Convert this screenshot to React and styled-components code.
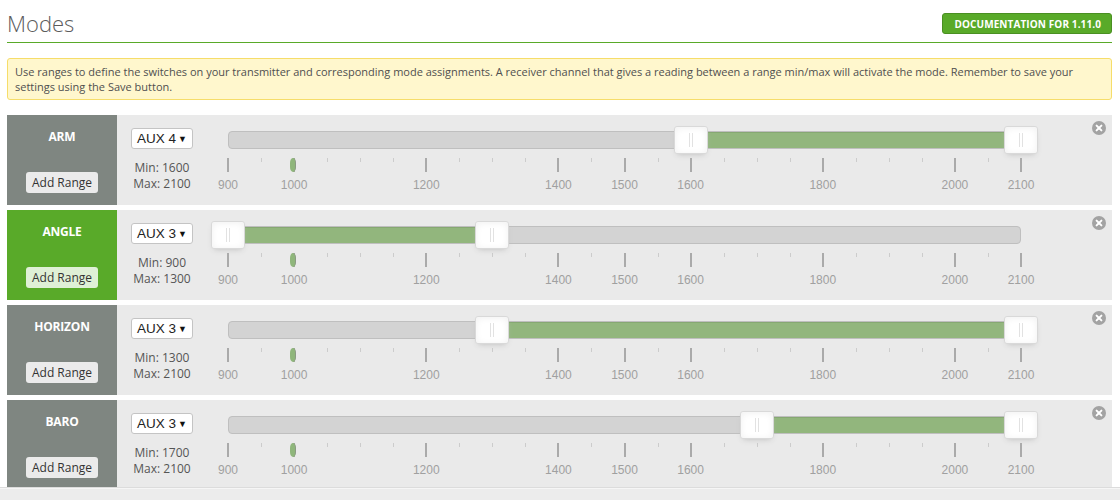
import React from "react";
import styled, { createGlobalStyle } from "styled-components";

const GlobalStyle = createGlobalStyle`
  html, body { margin: 0; padding: 0; background: #ffffff; }
  body { font-family: "Open Sans", "Liberation Sans", Arial, sans-serif; color: #4f4f4f; }
`;

const MIN = 900;
const MAX = 2100;
const TRACK_W = 793;
const pos = (v) => ((v - MIN) / (MAX - MIN)) * TRACK_W;

const LABELS = [900, 1000, 1200, 1400, 1500, 1600, 1800, 2000, 2100];
const SMALL = [];
for (let v = MIN; v <= MAX; v += 50) if (!LABELS.includes(v)) SMALL.push(v);

const Page = styled.div`
  padding: 0 8px 20px 7px;
`;

const Header = styled.div`
  display: flex;
  justify-content: space-between;
  align-items: flex-start;
  padding-top: 8px;
  padding-bottom: 4px;
  border-bottom: 1px solid #59aa29;
`;

const Title = styled.h1`
  margin: 0;
  font-family: "Open Sans", sans-serif;
  font-weight: 300;
  font-size: 22px;
  line-height: 30px;
  color: #5c5c5c;
`;

const DocButton = styled.a`
  margin-top: 5px;
  height: 21px;
  box-sizing: border-box;
  display: flex;
  align-items: center;
  padding: 0 10px 0 11px;
  background: #59aa29;
  border: 1px solid #4a8f22;
  border-radius: 3px;
  color: #ffffff;
  font-family: "Open Sans", sans-serif;
  font-weight: 700;
  font-size: 10px;
  letter-spacing: 0.1px;
  text-decoration: none;
`;

const Note = styled.div`
  margin-top: 15px;
  box-sizing: border-box;
  background: #fff7cd;
  border: 1px solid #f6dd6a;
  border-radius: 3px;
  padding: 5px 7px;
  font-size: 11px;
  line-height: 15px;
  color: #4f4f4f;
`;

const Modes = styled.div`
  margin-top: 15px;
  display: flex;
  flex-direction: column;
  gap: 5px;
`;

const Row = styled.div`
  display: flex;
  height: 90px;
  background: #eaeaea;
`;

const Info = styled.div`
  width: 110px;
  flex: none;
  display: flex;
  flex-direction: column;
  align-items: center;
  padding: 14px 0 12px;
  box-sizing: border-box;
  background: ${(p) => (p.$on ? "#59aa29" : "#7f8681")};
`;

const ModeName = styled.div`
  color: #ffffff;
  font-weight: 700;
  font-size: 12px;
  line-height: 16px;
  letter-spacing: -0.2px;
`;

const AddRange = styled.button`
  margin-top: auto;
  height: 21px;
  padding: 0 6px;
  border: none;
  border-radius: 3px;
  background: ${(p) => (p.$on ? "#dff0d6" : "#ebebeb")};
  color: #333333;
  font-family: "Open Sans", sans-serif;
  font-size: 12px;
  line-height: 21px;
  cursor: pointer;
`;

const Body = styled.div`
  flex: 1;
  display: flex;
  align-items: flex-start;
  padding: 13px 6px 0 14px;
`;

const Channel = styled.div`
  width: 62px;
  flex: none;
  display: flex;
  flex-direction: column;
  align-items: center;
`;

const Select = styled.div`
  width: 62px;
  height: 21px;
  box-sizing: border-box;
  display: flex;
  align-items: center;
  justify-content: space-between;
  padding: 0 5px 0 5px;
  background: #ffffff;
  border: 1px solid #c4c4c4;
  border-radius: 3px;
  font-family: "Liberation Sans", Arial, sans-serif;
  font-size: 13.5px;
  color: #222222;
`;

const Arrow = styled.span`
  font-size: 9px;
  color: #111;
`;

const Limits = styled.div`
  margin-top: 11px;
  font-size: 12px;
  line-height: 16px;
  color: #555555;
  text-align: center;
  white-space: nowrap;
`;

const Slider = styled.div`
  position: relative;
  width: ${TRACK_W}px;
  height: 70px;
  margin-left: 35px;
  flex: none;
`;

const Track = styled.div`
  position: relative;
  margin-top: 3px;
  height: 18px;
  box-sizing: border-box;
  background: #d3d3d3;
  border: 1px solid #bfbfbf;
  border-radius: 4px;
`;

const Connect = styled.div`
  position: absolute;
  top: 0;
  bottom: 0;
  background: #92b67d;
  border-top: 1px solid #86a872;
`;

const Handle = styled.div`
  position: absolute;
  top: -2px;
  width: 34px;
  height: 28px;
  margin-left: -17px;
  box-sizing: border-box;
  background: #ffffff;
  border: 1px solid #d9d9d9;
  border-radius: 3px;
  box-shadow: inset 0 0 1px #fff, inset 0 1px 7px #f0f0f0, 0 3px 6px -3px #bbb;
  z-index: 2;
  &::before, &::after {
    content: "";
    position: absolute;
    top: 6px;
    height: 14px;
    width: 1px;
    background: #e2e2e2;
  }
  &::before { left: 14px; }
  &::after { left: 17px; }
`;

const Tick = styled.div`
  position: absolute;
  top: 30px;
  width: ${(p) => (p.$large ? 2 : 1)}px;
  height: ${(p) => (p.$large ? 14 : 4)}px;
  margin-left: ${(p) => (p.$large ? -1 : 0)}px;
  background: ${(p) => (p.$large ? "#aaaaaa" : "#cccccc")};
`;

const Marker = styled.div`
  position: absolute;
  top: 30px;
  width: 6px;
  height: 14px;
  margin-left: -4px;
  border-radius: 3px / 5px;
  background: #8fb67b;
  border-right: 1px solid #8b9a83;
  box-sizing: border-box;
`;

const PipLabel = styled.div`
  position: absolute;
  top: 50px;
  transform: translateX(-50%);
  font-family: "Liberation Sans", Arial, sans-serif;
  font-size: 12px;
  line-height: 14px;
  color: #a0a0a0;
`;

const Remove = styled.button`
  margin-left: auto;
  margin-top: -7px;
  width: 14px;
  height: 14px;
  padding: 0;
  border: none;
  background: transparent;
  display: flex;
  cursor: pointer;
`;

const RemoveIcon = () => (
  <svg width="14" height="14" viewBox="0 0 14 14">
    <circle cx="7" cy="7" r="7" fill="#a3a3a3" />
    <path d="M4.6 4.6 L9.4 9.4 M9.4 4.6 L4.6 9.4" stroke="#ffffff" strokeWidth="2" strokeLinecap="round" />
  </svg>
);

const Footer = styled.div`
  position: fixed;
  left: 0;
  right: 0;
  bottom: 0;
  height: 11px;
  background: #ececec;
  border-top: 1px solid #f6f6f6;
  box-shadow: 0 -1px 0 #dcdcdc;
`;

const MODES = [
  { name: "ARM", aux: "AUX 4", min: 1600, max: 2100, on: false },
  { name: "ANGLE", aux: "AUX 3", min: 900, max: 1300, on: true },
  { name: "HORIZON", aux: "AUX 3", min: 1300, max: 2100, on: false },
  { name: "BARO", aux: "AUX 3", min: 1700, max: 2100, on: false },
];

function RangeSlider({ min, max, value }) {
  return (
    <Slider>
      <Track>
        <Connect style={{ left: pos(min), width: pos(max) - pos(min) }} />
      </Track>
      <Handle style={{ left: pos(min) }} />
      <Handle style={{ left: pos(max) }} />
      {SMALL.map((v) => (
        <Tick key={"s" + v} style={{ left: pos(v) }} />
      ))}
      {LABELS.map((v) => (
        <Tick key={"l" + v} $large style={{ left: pos(v) }} />
      ))}
      <Marker style={{ left: pos(value) }} />
      {LABELS.map((v) => (
        <PipLabel key={"p" + v} style={{ left: pos(v) }}>
          {v}
        </PipLabel>
      ))}
    </Slider>
  );
}

export default function App() {
  return (
    <>
      <GlobalStyle />
      <Page>
        <Header>
          <Title>Modes</Title>
          <DocButton href="#">DOCUMENTATION FOR 1.11.0</DocButton>
        </Header>
        <Note>
          Use ranges to define the switches on your transmitter and corresponding mode assignments. A receiver channel
          that gives a reading between a range min/max will activate the mode. Remember to save your settings using the
          Save button.
        </Note>
        <Modes>
          {MODES.map((m) => (
            <Row key={m.name}>
              <Info $on={m.on}>
                <ModeName>{m.name}</ModeName>
                <AddRange $on={m.on}>Add Range</AddRange>
              </Info>
              <Body>
                <Channel>
                  <Select>
                    <span>{m.aux}</span>
                    <Arrow>▼</Arrow>
                  </Select>
                  <Limits>
                    Min: {m.min}
                    <br />
                    Max: {m.max}
                  </Limits>
                </Channel>
                <RangeSlider min={m.min} max={m.max} value={1000} />
                <Remove aria-label="remove">
                  <RemoveIcon />
                </Remove>
              </Body>
            </Row>
          ))}
        </Modes>
      </Page>
      <Footer />
    </>
  );
}
